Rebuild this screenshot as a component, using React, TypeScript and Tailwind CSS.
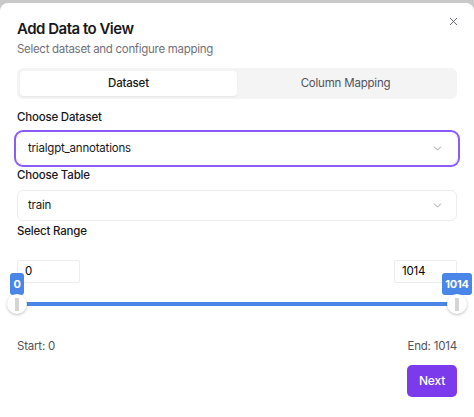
import { ChevronDown, X } from "lucide-react";

const Thumb = ({ label, side }: { label: string; side: "left" | "right" }) => {
  const pos = side === "left" ? "left-0" : "right-0";
  return (
    <div className={`absolute top-0 ${pos} w-0 flex flex-col items-center`}>
      <div className="h-[22px] px-[3px] min-w-[12px] flex items-center justify-center rounded-[3px] bg-[#4a86e8] text-[11px] font-bold leading-none text-white">
        {label}
      </div>
      <div className="-mt-[1px] w-[20px] h-[20px] shrink-0 rounded-full bg-white shadow-[0_1px_3px_rgba(0,0,0,0.25)] flex items-center justify-center">
        <div className="w-[4px] h-[13px] bg-[#d4d4d4]" />
      </div>
    </div>
  );
};

export default function App() {
  return (
    <div className="w-[474px] h-[417px] bg-[#c9c9c9] pt-[3px] overflow-hidden" style={{ fontFamily: "Inter, 'Noto Sans', sans-serif" }}>
      <div className="relative h-full bg-white rounded-t-[8px] px-[17px] pt-[16px] text-[#18181b] text-[11.5px] tracking-[-0.2px]">
        <button className="absolute right-[14px] top-[12px] text-[#52525b]">
          <X size={13} strokeWidth={1.6} />
        </button>

        {/* Header */}
        <h2 className="text-[15px] leading-[20px] font-semibold tracking-[-0.5px]">Add Data to View</h2>
        <p className="text-[11.5px] leading-[16px] tracking-[-0.3px] text-[#71717a] mt-[2px]">Select dataset and configure mapping</p>

        {/* Tabs */}
        <div className="mt-[11px] h-[31px] p-[3px] grid grid-cols-2 rounded-[6px] bg-[#f4f4f5]">
          <div className="flex items-center justify-center rounded-[4px] bg-white shadow-[0_1px_2px_rgba(0,0,0,0.06)] font-medium">
            Dataset
          </div>
          <div className="flex items-center justify-center text-[#52525b]">Column Mapping</div>
        </div>

        {/* Dataset */}
        <label className="block mt-[10px] leading-[16px] font-medium">Choose Dataset</label>
        <div className="mt-[8px] h-[31px] flex items-center justify-between pl-[10px] pr-[12px] rounded-[6px] border border-white ring-2 ring-[#8b5cf6] ring-offset-1">
          <span>trialgpt_annotations</span>
          <ChevronDown size={13} strokeWidth={1.5} className="text-[#8b8b93]" />
        </div>

        {/* Table */}
        <label className="block mt-[3px] leading-[16px] font-medium">Choose Table</label>
        <div className="mt-[7px] h-[31px] flex items-center justify-between pl-[10px] pr-[12px] rounded-[6px] border border-[#ededed]">
          <span>train</span>
          <ChevronDown size={13} strokeWidth={1.5} className="text-[#8b8b93]" />
        </div>

        {/* Range */}
        <label className="block mt-[2px] leading-[16px] font-medium">Select Range</label>
        <div className="mt-[21px] flex justify-between">
          <div className="w-[63px] h-[23px] flex items-center pl-[7px] border border-[#ededed] rounded-[2px] text-black">0</div>
          <div className="w-[63px] h-[23px] flex items-center pl-[7px] border border-[#ededed] rounded-[2px] text-black">1014</div>
        </div>
        <div className="relative -mt-[10px] h-[44px]">
          <div className="absolute left-0 right-0 top-[29px] h-[4px] bg-[#4a86e8]" />
          <Thumb label="0" side="left" />
          <Thumb label="1014" side="right" />
        </div>

        <div className="mt-[21px] flex justify-between text-[#52525b]">
          <span>Start: 0</span>
          <span>End: 1014</span>
        </div>

        <div className="mt-[10px] flex justify-end">
          <button className="w-[50px] h-[32px] rounded-[5px] bg-[#7c3aed] text-white text-[12px] font-medium">Next</button>
        </div>
      </div>
    </div>
  );
}
